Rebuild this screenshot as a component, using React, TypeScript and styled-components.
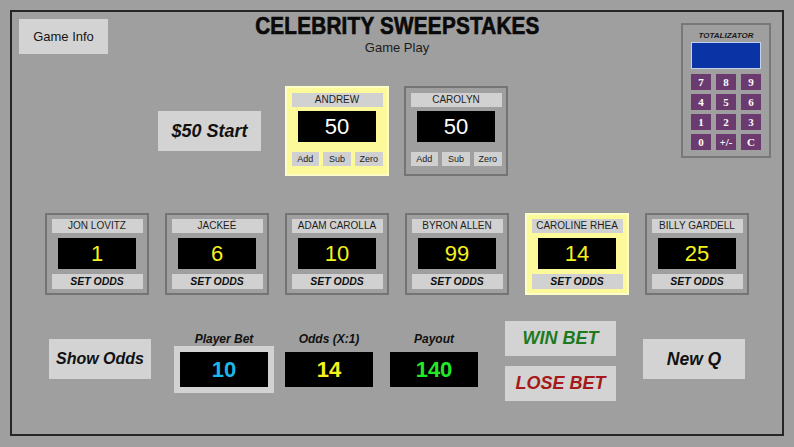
import React from 'react';
import styled, { createGlobalStyle } from 'styled-components';

const GlobalStyle = createGlobalStyle`
  html,
  body {
    margin: 0;
    padding: 0;
    background: #9f9f9f;
  }

  body {
    font-family: 'Liberation Sans', Arial, sans-serif;
    color: #141414;
  }

  button {
    font-family: 'Liberation Sans', Arial, sans-serif;
    border: 0;
    padding: 0;
    margin: 0;
    cursor: pointer;
  }
`;

type Celebrity = {
  name: string;
  odds: number;
  active?: boolean;
};

const players = [
  { name: 'ANDREW', score: 50, active: true },
  { name: 'CAROLYN', score: 50 },
];

const celebrities: Celebrity[] = [
  { name: 'JON LOVITZ', odds: 1 },
  { name: 'JACKEÉ', odds: 6 },
  { name: 'ADAM CAROLLA', odds: 10 },
  { name: 'BYRON ALLEN', odds: 99 },
  { name: 'CAROLINE RHEA', odds: 14, active: true },
  { name: 'BILLY GARDELL', odds: 25 },
];

const keys = ['7', '8', '9', '4', '5', '6', '1', '2', '3', '0', '+/-', 'C'];

export default function App() {
  return (
    <>
      <GlobalStyle />
      <Frame>
        <Top>
          <GameInfo>Game Info</GameInfo>

          <TitleBlock>
            <Title>CELEBRITY SWEEPSTAKES</Title>
            <Subtitle>Game Play</Subtitle>
          </TitleBlock>

          <Totalizator>
            <TotalLabel>TOTALIZATOR</TotalLabel>
            <TotalScreen />
            <Keypad>
              {keys.map((k) => (
                <Key key={k}>{k}</Key>
              ))}
            </Keypad>
          </Totalizator>

          <PlayerRow>
            <ActionButton $w={103} $h={40} $size={18} style={{ marginRight: 9 }}>
              $50 Start
            </ActionButton>
            {players.map((p) => (
              <PlayerCard key={p.name} $active={p.active}>
                <NameTag>{p.name}</NameTag>
                <ScoreDisplay>{p.score}</ScoreDisplay>
                <MiniButtons>
                  <MiniButton>Add</MiniButton>
                  <MiniButton>Sub</MiniButton>
                  <MiniButton>Zero</MiniButton>
                </MiniButtons>
              </PlayerCard>
            ))}
          </PlayerRow>
        </Top>

        <OddsRow>
          {celebrities.map((c) => (
            <OddsCard key={c.name} $active={c.active}>
              <NameTag>{c.name}</NameTag>
              <OddsDisplay>{c.odds}</OddsDisplay>
              <SetOdds>SET ODDS</SetOdds>
            </OddsCard>
          ))}
        </OddsRow>

        <BottomRow>
          <ActionButton $w={102} $h={40} $size={16} style={{ marginTop: 18 }}>
            Show Odds
          </ActionButton>

          <BetGroup>
            <BetColumn>
              <BetLabel>Player Bet</BetLabel>
              <BetDisplay $color='#1db6e8' $framed>
                10
              </BetDisplay>
            </BetColumn>
            <BetColumn>
              <BetLabel>Odds (X:1)</BetLabel>
              <BetDisplay $color='#f4f21c'>14</BetDisplay>
            </BetColumn>
            <BetColumn>
              <BetLabel>Payout</BetLabel>
              <BetDisplay $color='#22e826'>140</BetDisplay>
            </BetColumn>
          </BetGroup>

          <ResultStack>
            <ActionButton $w={111} $h={35} $size={18} $color='#1f7a1f'>
              WIN BET
            </ActionButton>
            <ActionButton $w={111} $h={35} $size={18} $color='#a41a1a'>
              LOSE BET
            </ActionButton>
          </ResultStack>

          <ActionButton $w={102} $h={40} $size={17.5} style={{ marginTop: 18, marginLeft: 27 }}>
            New Q
          </ActionButton>
        </BottomRow>
      </Frame>
    </>
  );
}

const Frame = styled.div`
  box-sizing: border-box;
  width: 774px;
  height: 426px;
  margin: 10px 0 0 10px;
  border: 2px solid #262626;
  display: flex;
  flex-direction: column;
`;

const Top = styled.div`
  display: grid;
  grid-template-columns: 1fr auto 1fr;
  grid-template-rows: auto auto;
`;

const GameInfo = styled.button`
  grid-column: 1;
  grid-row: 1;
  align-self: start;
  justify-self: start;
  width: 89px;
  height: 35px;
  margin: 7px 0 0 7px;
  background: #d3d3d3;
  color: #141414;
  font-size: 13px;
`;

const TitleBlock = styled.div`
  grid-column: 2;
  grid-row: 1;
  display: flex;
  flex-direction: column;
  align-items: center;
`;

const Title = styled.h1`
  margin: 0;
  font-size: 24px;
  line-height: 28px;
  font-weight: 700;
  color: #0a0a0a;
  white-space: nowrap;
  letter-spacing: 0.3px;
  -webkit-text-stroke: 0.7px #0a0a0a;
  transform: scaleX(0.86);
`;

const Subtitle = styled.div`
  font-size: 13px;
  line-height: 16px;
  color: #1a1a1a;
`;

const Totalizator = styled.div`
  grid-column: 3;
  grid-row: 1 / span 2;
  justify-self: end;
  align-self: start;
  box-sizing: border-box;
  width: 90px;
  height: 135px;
  margin: 11px 11px 0 0;
  padding-top: 6px;
  border: 2px solid #787878;
  display: flex;
  flex-direction: column;
  align-items: center;
`;

const TotalLabel = styled.div`
  font-size: 8px;
  line-height: 10px;
  font-weight: 700;
  font-style: italic;
  color: #1a1a1a;
`;

const TotalScreen = styled.div`
  box-sizing: border-box;
  width: 70px;
  height: 27px;
  margin-top: 1px;
  background: #0a34a6;
  border: 1px solid #c4d0ee;
`;

const Keypad = styled.div`
  display: grid;
  grid-template-columns: repeat(3, 20px);
  grid-auto-rows: 16px;
  column-gap: 5px;
  row-gap: 4px;
  margin-top: 5px;
`;

const Key = styled.button`
  background: #6b3b6f;
  color: #ffffff;
  font-family: 'Liberation Serif', 'Times New Roman', serif;
  font-size: 11px;
  font-weight: 700;
  line-height: 16px;
`;

const PlayerRow = styled.div`
  grid-column: 1 / 3;
  grid-row: 2;
  display: flex;
  align-items: center;
  gap: 15px;
  padding-left: 146px;
  margin-top: 30px;
`;

const CardFrame = styled.div<{ $active?: boolean }>`
  box-sizing: border-box;
  width: 104px;
  display: flex;
  flex-direction: column;
  align-items: center;
  border: 2px solid ${(p) => (p.$active ? '#fdfdc8' : '#747474')};
  background: ${(p) => (p.$active ? '#fbf99a' : 'transparent')};
`;

const PlayerCard = styled(CardFrame)`
  height: 90px;
  padding-top: 5px;
`;

const OddsCard = styled(CardFrame)`
  height: 82px;
  padding-top: 4px;
`;

const NameTag = styled.div`
  width: 91px;
  height: 14px;
  background: #d1d1d1;
  color: #1e1e1e;
  font-size: 10px;
  line-height: 14px;
  text-align: center;
  white-space: nowrap;
`;

const Screen = styled.div`
  width: 78px;
  height: 31px;
  background: #000000;
  font-size: 22px;
  line-height: 31px;
  text-align: center;
`;

const ScoreDisplay = styled(Screen)`
  color: #ffffff;
  margin: 4px 0 10px;
`;

const OddsDisplay = styled(Screen)`
  color: #f4f21c;
  margin: 5px 0;
`;

const MiniButtons = styled.div`
  width: 91px;
  display: flex;
  gap: 4px;
`;

const MiniButton = styled.button`
  flex: 1;
  height: 14px;
  background: #d0d0d0;
  color: #222222;
  font-size: 9px;
  line-height: 14px;
`;

const SetOdds = styled.button`
  width: 91px;
  height: 15px;
  background: #d1d1d1;
  color: #111111;
  font-size: 10.5px;
  font-weight: 700;
  font-style: italic;
  line-height: 15px;
`;

const OddsRow = styled.div`
  display: flex;
  gap: 16px;
  padding-left: 33px;
  margin-top: 37px;
`;

const BottomRow = styled.div`
  display: flex;
  align-items: flex-start;
  padding-left: 37px;
  margin-top: 26px;
`;

const ActionButton = styled.button<{
  $w: number;
  $h: number;
  $size: number;
  $color?: string;
}>`
  width: ${(p) => p.$w}px;
  height: ${(p) => p.$h}px;
  background: #d3d3d3;
  color: ${(p) => p.$color ?? '#111111'};
  font-size: ${(p) => p.$size}px;
  font-weight: 700;
  font-style: italic;
  white-space: nowrap;
  flex-shrink: 0;
`;

const BetGroup = styled.div`
  display: flex;
  gap: 17px;
  margin: 11px 0 0 29px;
`;

const BetColumn = styled.div`
  width: 88px;
  display: flex;
  flex-direction: column;
  align-items: center;
`;

const BetLabel = styled.div`
  font-size: 12px;
  line-height: 14px;
  font-weight: 700;
  font-style: italic;
  color: #111111;
  margin-bottom: 6px;
  white-space: nowrap;
`;

const BetDisplay = styled.div<{ $color: string; $framed?: boolean }>`
  width: 88px;
  height: 35px;
  background: #000000;
  color: ${(p) => p.$color};
  font-size: 22px;
  font-weight: 700;
  line-height: 35px;
  text-align: center;
  outline: ${(p) => (p.$framed ? '6px solid #d2d2d2' : 'none')};
`;

const ResultStack = styled.div`
  display: flex;
  flex-direction: column;
  gap: 10px;
  margin-left: 27px;
`;
